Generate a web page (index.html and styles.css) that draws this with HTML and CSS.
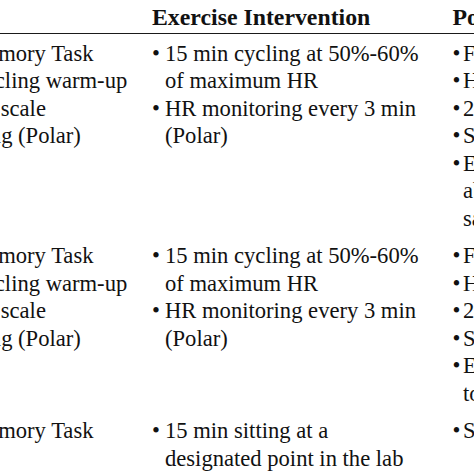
FILE: index.html
```html
<!DOCTYPE html>
<html lang="en">
<head>
  <meta charset="UTF-8">
  <title>Study protocol</title>
  <link rel="stylesheet" href="styles.css">
</head>
<body>

<table class="protocol">
  <colgroup>
    <col class="col-pre">
    <col class="col-ex">
    <col class="col-post">
  </colgroup>
  <thead>
    <tr>
      <th>Baseline</th>
      <th>Exercise Intervention</th>
      <th class="post">Post-Intervention</th>
    </tr>
  </thead>
  <tbody>
    <tr>
      <td class="pre">
        <ul class="items">
          <li>Sternberg Memory Task</li>
          <li>10-minute cycling warm-up</li>
          <li>Borg RPE 10 scale</li>
          <li>HR monitoring (Polar)</li>
        </ul>
      </td>
      <td>
        <ul class="items">
          <li>15 min cycling at 50%-60% of maximum HR</li>
          <li>HR monitoring every 3 min (Polar)</li>
        </ul>
      </td>
      <td class="post">
        <ul class="items">
          <li>Flanker Task</li>
          <li>HR recovery</li>
          <li>24-h recall</li>
          <li>Saliva sample</li>
          <li>Exit questionnaire<br>about enjoyment<br>satisfaction</li>
        </ul>
      </td>
    </tr>
    <tr>
      <td class="pre">
        <ul class="items">
          <li>Sternberg Memory Task</li>
          <li>10-minute cycling warm-up</li>
          <li>Borg RPE 10 scale</li>
          <li>HR monitoring (Polar)</li>
        </ul>
      </td>
      <td>
        <ul class="items">
          <li>15 min cycling at 50%-60% of maximum HR</li>
          <li>HR monitoring every 3 min (Polar)</li>
        </ul>
      </td>
      <td class="post">
        <ul class="items">
          <li>Flanker Task</li>
          <li>HR recovery</li>
          <li>24-h recall</li>
          <li>Saliva sample</li>
          <li>Exit questionnaire<br>to the sessions</li>
        </ul>
      </td>
    </tr>
    <tr>
      <td class="pre">
        <ul class="items">
          <li>Sternberg Memory Task</li>
        </ul>
      </td>
      <td>
        <ul class="items">
          <li>15 min sitting at a designated point in the lab</li>
        </ul>
      </td>
      <td class="post">
        <ul class="items">
          <li>Saliva sample</li>
        </ul>
      </td>
    </tr>
  </tbody>
</table>

</body>
</html>
```

FILE: styles.css
```css
html, body {
  margin: 0;
  overflow: hidden;
  background: #fff;
}

body {
  font-family: "Liberation Serif", "Times New Roman", serif;
  font-size: 22.6px;
  line-height: 27.5px;
  color: #111;
}

.protocol {
  border-collapse: collapse;
  table-layout: fixed;
  width: 850px;
  margin-left: -138px;
}

.col-pre {
  width: 290px;
}

.col-ex {
  width: 300px;
}

.col-post {
  width: 260px;
}

.protocol th {
  text-align: left;
  font-size: 23.8px;
  font-weight: bold;
  padding: 4px 0 1.6px;
  border-bottom: 1.5px solid #1a1a1a;
}

.protocol td {
  vertical-align: top;
  padding: 5.5px 24px 4.5px 0;
}

.protocol td.pre {
  padding-right: 0;
}

.protocol .post {
  padding-left: 0.5px;
}

.items {
  margin: 0;
  padding: 0;
  list-style: none;
}

.items li {
  display: flex;
}

.items li::before {
  content: "•";
  flex: 0 0 13px;
}

.post .items li::before {
  flex-basis: 10.5px;
}
```
